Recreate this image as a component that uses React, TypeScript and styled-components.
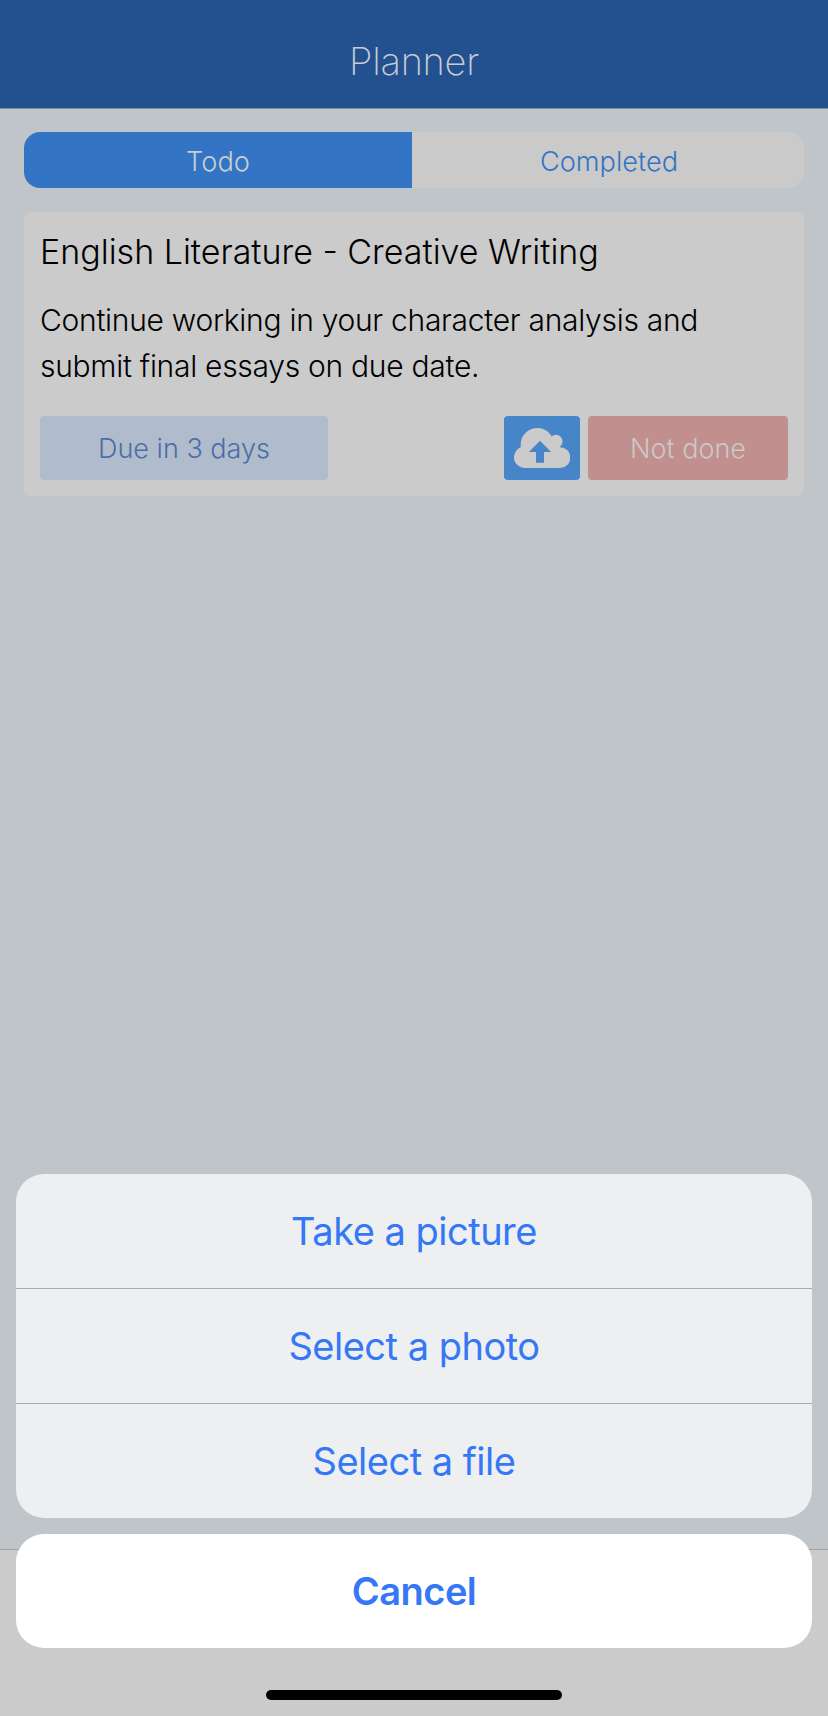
import React from 'react';
import styled, { createGlobalStyle } from 'styled-components';

const GlobalStyle = createGlobalStyle`
  html, body {
    margin: 0;
    padding: 0;
    background: #c0c5c9;
  }
  * {
    box-sizing: border-box;
  }
`;

const Page = styled.div`
  position: relative;
  width: 828px;
  height: 1716px;
  display: flex;
  flex-direction: column;
  overflow: hidden;
  background: #c0c5c9;
  font-family: Inter, 'Liberation Sans', sans-serif;
  font-weight: 300;
`;

const Header = styled.header`
  height: 109px;
  flex-shrink: 0;
  padding-top: 14px;
  display: flex;
  justify-content: center;
  align-items: center;
  background: #23508f;
  border-bottom: 1px solid #7f8b98;
  color: #c6ccd3;
  font-size: 38px;
  font-weight: 200;
  letter-spacing: -0.3px;
`;

const Content = styled.main`
  flex: 1;
  padding: 23px 24px 0;
  display: flex;
  flex-direction: column;
  gap: 24px;
`;

const Tabs = styled.div`
  height: 56px;
  display: grid;
  grid-template-columns: 388px 392px;
  border-radius: 16px;
  overflow: hidden;
  background: #cacaca;
`;

const Tab = styled.div<{ $active?: boolean }>`
  display: flex;
  align-items: center;
  justify-content: center;
  padding-top: 2px;
  padding-left: ${(p) => (p.$active ? '0' : '2px')};
  font-size: 27.2px;
  background: ${(p) => (p.$active ? '#3375c4' : '#cacaca')};
  color: ${(p) => (p.$active ? '#c9cdd2' : '#3375c4')};
`;

const Card = styled.section`
  height: 284px;
  padding: 19px 16px 16px;
  display: flex;
  flex-direction: column;
  border-radius: 6px;
  background: #cbcbcb;
`;

const Title = styled.div`
  font-size: 34px;
  line-height: 42px;
  color: #000;
`;

const Description = styled.div`
  margin-top: 24px;
  font-size: 30px;
  line-height: 46px;
  letter-spacing: -0.28px;
  color: #000;
`;

const Actions = styled.div`
  margin-top: auto;
  height: 64px;
  display: flex;
  gap: 8px;
`;

const Badge = styled.div<{ $tone: 'due' | 'open' }>`
  width: ${(p) => (p.$tone === 'due' ? '288px' : '200px')};
  margin-right: ${(p) => (p.$tone === 'due' ? 'auto' : '0')};
  display: flex;
  align-items: center;
  justify-content: center;
  border-radius: 4px;
  font-size: 27px;
  background: ${(p) => (p.$tone === 'due' ? '#b0bccb' : '#c18f8e')};
  color: ${(p) => (p.$tone === 'due' ? '#4b6ea8' : '#cbc9c9')};
`;

const UploadButton = styled.div`
  width: 76px;
  display: flex;
  align-items: center;
  justify-content: center;
  border-radius: 4px;
  background: #4685c8;
`;

const TabBar = styled.footer`
  height: 167px;
  flex-shrink: 0;
  background: #cbcbcb;
  border-top: 1px solid #a3a3a3;
`;

const Sheet = styled.div`
  position: absolute;
  left: 16px;
  right: 16px;
  top: 1174px;
  display: flex;
  flex-direction: column;
  gap: 16px;
`;

const SheetGroup = styled.div`
  border-radius: 28px;
  overflow: hidden;
  background: #eeeff1;
`;

const SheetRow = styled.div<{ $cancel?: boolean; $first?: boolean }>`
  height: ${(p) => (p.$first ? '114px' : '115px')};
  display: flex;
  align-items: center;
  justify-content: center;
  font-size: 38px;
  letter-spacing: -0.5px;
  font-weight: ${(p) => (p.$cancel ? 600 : 400)};
  color: #3478f6;
  background: ${(p) => (p.$cancel ? '#ffffff' : 'transparent')};
  & + & {
    border-top: 1px solid #a9abaf;
  }
`;

const HomeIndicator = styled.div`
  position: absolute;
  left: 266px;
  bottom: 16px;
  width: 296px;
  height: 10px;
  border-radius: 5px;
  background: #000;
`;

function CloudUpload() {
  return (
    <svg width="56" height="40" viewBox="10 12 56 40">
      <g fill="#cbcbcb">
        <circle cx="33.3" cy="28.7" r="16.7" />
        <circle cx="52" cy="25.3" r="6.5" />
        <circle cx="20.7" cy="41.3" r="10.7" />
        <circle cx="56" cy="41.6" r="10.4" />
        <rect x="21" y="30" width="35" height="22" />
      </g>
      <path d="M36 24.7 47 36 H40 V46.7 H32 V36 H25 Z" fill="#4685c8" />
    </svg>
  );
}

export default function App() {
  return (
    <Page>
      <GlobalStyle />
      <Header>Planner</Header>
      <Content>
        <Tabs>
          <Tab $active>Todo</Tab>
          <Tab>Completed</Tab>
        </Tabs>
        <Card>
          <Title>English Literature - Creative Writing</Title>
          <Description>
            Continue working in your character analysis and
            <br />
            submit final essays on due date.
          </Description>
          <Actions>
            <Badge $tone="due">Due in 3 days</Badge>
            <UploadButton>
              <CloudUpload />
            </UploadButton>
            <Badge $tone="open">Not done</Badge>
          </Actions>
        </Card>
      </Content>
      <TabBar />
      <Sheet>
        <SheetGroup>
          <SheetRow $first>Take a picture</SheetRow>
          <SheetRow>Select a photo</SheetRow>
          <SheetRow>Select a file</SheetRow>
        </SheetGroup>
        <SheetGroup>
          <SheetRow $cancel $first>Cancel</SheetRow>
        </SheetGroup>
      </Sheet>
      <HomeIndicator />
    </Page>
  );
}
